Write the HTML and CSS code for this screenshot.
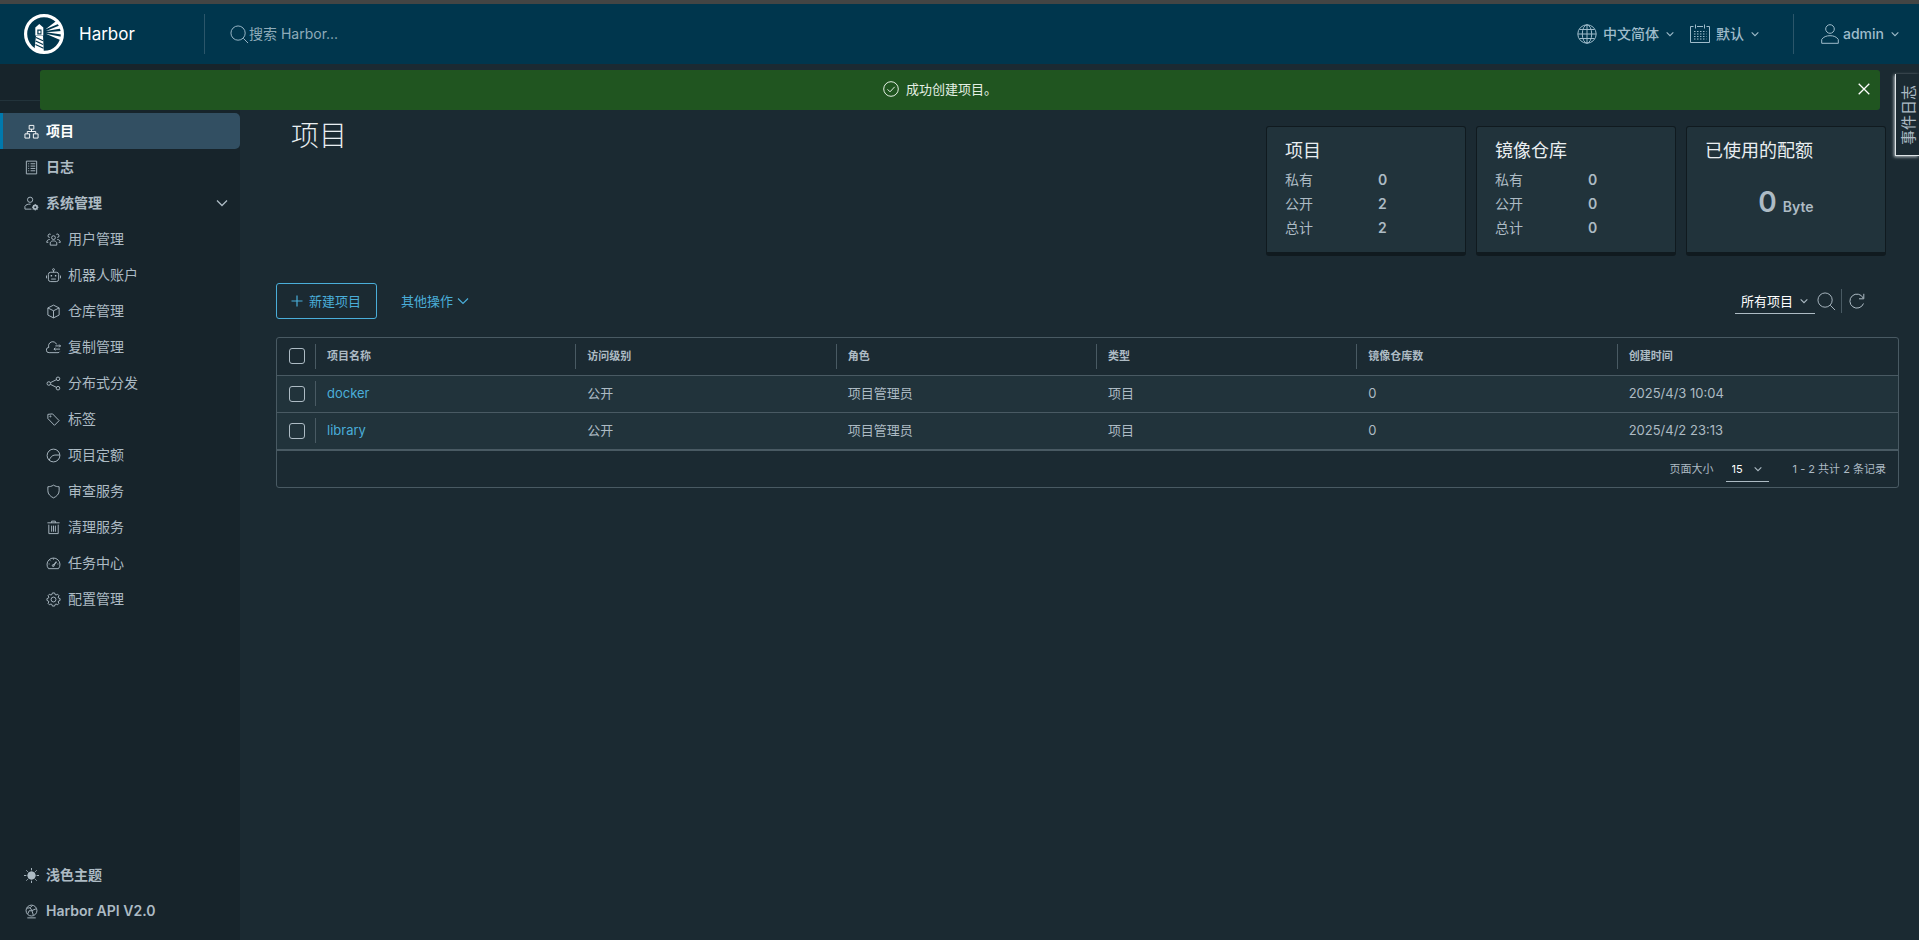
FILE: index.html
```html
<!DOCTYPE html>
<html lang="zh-CN">
<head>
<meta charset="utf-8">
<title>Harbor</title>
<link rel="stylesheet" href="styles.css">
</head>
<body>
<svg class="sprite" aria-hidden="true">
  <symbol id="chevron" viewBox="0 0 12 12"><path d="M1 3.500 6 8.500l5-5"/></symbol>
  <symbol id="search" viewBox="0 0 20 20"><circle cx="8.500" cy="8.500" r="7.500"/><path d="m14 14 5 5"/></symbol>
</svg>

<header class="header">
  <a class="brand" href="#">
    <svg class="logo" viewBox="0 0 40 40" aria-hidden="true">
      <circle cx="20" cy="20" r="18.400" fill="none" stroke="#fff" stroke-width="3.200"/>
      <path fill="#fff" d="M15.300 10 19.300 13.500v2h-8v-2zM11.300 15.500h8v6h-8z"/>
      <path fill="#00364d" d="M13.300 15.500h4.200v5h-4.200z"/>
      <path fill="#fff" d="M14.500 16.700h2v2.600h-2z"/>
      <path fill="#fff" d="M12 21.800h7l.8 16.200-9.300-2.500z"/>
      <path stroke="#00364d" stroke-width="1.200" d="m12 23.500 7 3.300M11.700 27l7.300 3.500M11.500 30.500l8 3.800"/>
      <path fill="#fff" d="m21.500 15.300 10.800-8.300 2.500 2.800zM22 17l14-5.800 1 3.300zM22 18.300l15.500-1.300v3.500zM21.800 19.700l15.400 3-1 3.300z"/>
    </svg>
    <span>Harbor</span>
  </a>
  <form class="search" role="search">
    <label for="q"><svg class="line search-icon" aria-label="搜索"><use href="#search"/></svg></label>
    <input id="q" type="text" placeholder="搜索 Harbor...">
  </form>
  <div class="header-actions">
    <button class="header-button">
      <svg class="line icon-lg" viewBox="0 0 20 20"><circle cx="10" cy="10" r="9.200"/><ellipse cx="10" cy="10" rx="4.700" ry="9.200"/><path d="M10 .8v18.400M1 10h18M2.500 5.500h15M2.500 14.500h15"/></svg>
      <span>中文简体</span><svg class="line caret"><use href="#chevron"/></svg>
    </button>
    <button class="header-button">
      <svg class="line icon-lg" viewBox="0 0 20 20"><path d="M3.500 2.500h-3v16h19v-16h-3M7 2.500h6M5.500.5v4M14.500.5v4"/><path stroke-dasharray="1.500 1.500" d="M4 7.500h12.500M4 10h12.500M4 12.500h12.500M4 15h12.500"/></svg>
      <span>默认</span><svg class="line caret"><use href="#chevron"/></svg>
    </button>
    <button class="header-button account">
      <svg class="line icon-user" viewBox="0 0 18 20"><circle cx="9" cy="5" r="4.300"/><path d="M.7 19.300v-3.800C2.500 12.700 5.500 11.700 9 11.700s6.500 1 8.300 3.800v3.800z"/></svg>
      <span>admin</span><svg class="line caret"><use href="#chevron"/></svg>
    </button>
  </div>
</header>

<div class="alert" role="status">
  <svg class="line" viewBox="0 0 16 16"><circle cx="8" cy="8" r="7.300"/><path d="m4.500 8.300 2.500 2.500 4.700-5"/></svg>
  <span>成功创建项目。</span>
  <button class="alert-close" aria-label="关闭"><svg class="line" viewBox="0 0 12 12"><path d="m.7.7 10.600 10.600M11.300.7.7 11.300"/></svg></button>
</div>
<button class="event-log">事件日志</button>

<div class="layout">
  <nav class="sidebar">
    <a class="nav-item active" href="#"><svg class="line" viewBox="0 0 16 16"><path d="M5.500 1.500h5v4h-5zM1 10.500h5V15H1zM10 10.500h5V15h-5zM8 5.500V8M3.500 10.500V8h9v2.500"/></svg>项目</a>
    <a class="nav-item" href="#"><svg class="line" viewBox="0 0 16 16"><path d="M2.500 1.200h11v13.600h-11zM4.500 4h1M4.500 6.500h1M4.500 9h1M4.500 11.500h1M7 4h5M7 6.500h5M7 9h5M7 11.500h5"/></svg>日志</a>
    <button class="nav-item" aria-expanded="true"><svg class="line" viewBox="0 0 16 16"><circle cx="6.500" cy="4" r="2.800"/><path d="M8 14H1v-3c1-1.800 3-2.500 6-2.300"/><circle cx="12" cy="12" r="2" stroke-width="1.800"/><path d="M12 8.500v1.200M12 14.300v1.200M8.500 12h1.200M14.300 12h1.200M9.600 9.600l.8.800M14.400 9.600l-.8.800M9.600 14.400l.8-.8M14.400 14.400l-.8-.8"/></svg><span>系统管理</span><svg class="line nav-caret"><use href="#chevron"/></svg></button>
    <div class="nav-children">
      <a class="nav-item" href="#"><svg class="line" viewBox="0 0 16 16"><circle cx="8" cy="6" r="2"/><path d="M4.500 14v-2.500c.6-1.500 1.800-2 3.500-2s2.900.5 3.500 2V14zM5 2.500a1.800 1.800 0 1 0-1 3.300M11 2.500a1.800 1.800 0 1 1 1 3.300M4 8c-1.700 0-3 .8-3.300 3h1.800M12 8c1.700 0 3 .8 3.300 3h-1.800"/></svg>用户管理</a>
      <a class="nav-item" href="#"><svg class="line" viewBox="0 0 16 16"><rect x="2.500" y="4.500" width="11" height="10" rx="2.500"/><circle cx="8" cy="1.700" r="1"/><path d="M8 2.700v1.800M.5 8v3M15.500 8v3M5.500 11.800h5"/><path d="M5 8.200h1.500M9.500 8.200H11" stroke-width="1.500"/></svg>机器人账户</a>
      <a class="nav-item" href="#"><svg class="line" viewBox="0 0 16 16"><path d="m8 1.200 6 3v7.600l-6 3-6-3V4.200zM2 4.200l6 3 6-3M8 7.200v7.600"/></svg>仓库管理</a>
      <a class="nav-item" href="#"><svg class="line" viewBox="0 0 16 16"><path d="M14.500 12.500c-.3.700-1 1-1.700 1H3.300a2.800 2.800 0 0 1-.3-5.600 4.400 4.400 0 0 1 8.300-3.200M10 6.300h5.500M14 4.800l1.500 1.500L14 7.800M15 9.700H8.500M10 8.200 8.500 9.700l1.500 1.500"/></svg>复制管理</a>
      <a class="nav-item" href="#"><svg class="line" viewBox="0 0 16 16"><circle cx="3" cy="8" r="1.900"/><circle cx="12.800" cy="3" r="1.900"/><circle cx="12.800" cy="13" r="1.900"/><path d="m4.700 7.100 6.400-3.200M4.700 8.900l6.400 3.200"/></svg>分布式分发</a>
      <a class="nav-item" href="#"><svg class="line" viewBox="0 0 16 16"><path d="M2 2.500 7 2l7 7.200-5 5L2 7z"/><circle cx="4.700" cy="4.700" r=".6"/></svg>标签</a>
      <a class="nav-item" href="#"><svg class="line" viewBox="0 0 16 16"><circle cx="8" cy="8" r="6.800"/><path d="M14.800 7.500H9.500C6 7.800 5 10 3.300 13"/></svg>项目定额</a>
      <a class="nav-item" href="#"><svg class="line" viewBox="0 0 16 16"><path d="M8 1.200c2 1.300 4 1.700 6 1.700v4.300c0 3.500-2.500 6-6 7.600-3.500-1.600-6-4.100-6-7.600V2.900c2 0 4-.4 6-1.700z"/></svg>审查服务</a>
      <a class="nav-item" href="#"><svg class="line" viewBox="0 0 16 16"><path d="M1.500 3h13M6 3V1.200h4V3M3 5v9.500h10V5M6 6v6.500M8 6v6.500M10 6v6.500"/></svg>清理服务</a>
      <a class="nav-item" href="#"><svg class="line" viewBox="0 0 16 16"><path d="M2.700 13.500a6.900 6.900 0 1 1 10.600 0zM8 2.500v1.300M2.800 8.500h1M12.200 8.500h1M4.300 4.700l.8.800"/><path d="m8 10 3.200-4" stroke-width="1.500"/><circle cx="7.700" cy="10.200" r="1"/></svg>任务中心</a>
      <a class="nav-item" href="#"><svg class="line" viewBox="0 0 16 16"><circle cx="8" cy="8" r="2.600"/><path d="m6.800 1-.5 1.700-1 .5-1.700-.8-1.400 1.500.8 1.600-.4 1L1 7v2l1.600.6.4 1-.8 1.500 1.400 1.500 1.700-.8 1 .5.500 1.700h2.400l.5-1.700 1-.5 1.700.8 1.400-1.500-.8-1.500.4-1L15 9V7l-1.600-.5-.4-1 .8-1.600-1.400-1.500-1.700.8-1-.5L9.200 1z"/></svg>配置管理</a>
    </div>
    <div class="nav-footer">
      <button class="nav-item"><svg class="line" viewBox="0 0 16 16"><circle cx="8" cy="8" r="4" fill="currentColor"/><path d="M8 0v2.500M8 13.500V16M0 8h2.500M13.500 8H16M2.500 2.500l1.500 1.500M13.500 2.500 12 4M2.500 13.500 4 12M13.500 13.500 12 12"/></svg>浅色主题</button>
      <a class="nav-item" href="#"><svg class="line" viewBox="0 0 16 16"><circle cx="8" cy="7" r="5.800"/><path d="m3 4.500 3.500-.5 2 3L13 5M6.500 4 9 1.500M4 10.500l1.500-3.300 3 0L10 12M3.500 14.800h9"/></svg>Harbor API V2.0</a>
    </div>
  </nav>

  <main class="content">
    <section class="overview">
      <h1>项目</h1>
      <div class="cards">
        <article class="card"><h2>项目</h2>
          <dl><dt>私有</dt><dd>0</dd><dt>公开</dt><dd>2</dd><dt>总计</dt><dd>2</dd></dl></article>
        <article class="card"><h2>镜像仓库</h2>
          <dl><dt>私有</dt><dd>0</dd><dt>公开</dt><dd>0</dd><dt>总计</dt><dd>0</dd></dl></article>
        <article class="card"><h2>已使用的配额</h2>
          <p class="quota"><strong>0</strong><span>Byte</span></p></article>
      </div>
    </section>

    <div class="toolbar">
      <button class="button outline"><svg class="line" viewBox="0 0 12 12"><path d="M6 .5v11M.5 6h11"/></svg>新建项目</button>
      <button class="button link">其他操作<svg class="line"><use href="#chevron"/></svg></button>
      <div class="filters">
        <div class="select">
          <select aria-label="项目筛选"><option>所有项目</option></select>
          <svg class="line caret"><use href="#chevron"/></svg>
        </div>
        <button class="icon-button" aria-label="搜索"><svg class="line search-icon"><use href="#search"/></svg></button>
        <button class="icon-button refresh" aria-label="刷新"><svg class="line" viewBox="0 0 16 16"><path d="M14.500 10.500a7 7 0 1 1-.3-5.500M14.800.8v5H10"/></svg></button>
      </div>
    </div>

    <div class="datagrid">
      <table>
        <colgroup><col class="col-check"><col class="col-data" span="5"><col></colgroup>
        <thead>
          <tr><th class="check" scope="col"><input type="checkbox" aria-label="全选"></th><th scope="col">项目名称</th><th scope="col">访问级别</th><th scope="col">角色</th><th scope="col">类型</th><th scope="col">镜像仓库数</th><th scope="col">创建时间</th></tr>
        </thead>
        <tbody>
          <tr><td class="check"><input type="checkbox" aria-label="选择 docker"></td><td><a href="#">docker</a></td><td>公开</td><td>项目管理员</td><td>项目</td><td>0</td><td>2025/4/3 10:04</td></tr>
          <tr><td class="check"><input type="checkbox" aria-label="选择 library"></td><td><a href="#">library</a></td><td>公开</td><td>项目管理员</td><td>项目</td><td>0</td><td>2025/4/2 23:13</td></tr>
        </tbody>
      </table>
      <footer class="pagination">
        <label for="page-size">页面大小</label>
        <div class="select small">
          <select id="page-size"><option>15</option></select>
          <svg class="line caret"><use href="#chevron"/></svg>
        </div>
        <span class="range">1 - 2 共计 2 条记录</span>
      </footer>
    </div>
  </main>
</div>
</body>
</html>
```

FILE: styles.css
```css
* { box-sizing: border-box; }

body {
  margin: 0;
  min-height: 100vh;
  display: flex;
  flex-direction: column;
  position: relative;
  background: #1b2a32;
  color: #adbbc4;
  font: 13px/20px Inter, "Noto Sans CJK SC", sans-serif;
}

button, input, select {
  font: inherit;
  color: inherit;
  background: none;
  border: 0;
  padding: 0;
  margin: 0;
}

a { color: inherit; text-decoration: none; }
h1, h2, p, dl, dd { margin: 0; }
.sprite { position: absolute; width: 0; height: 0; }
.line { fill: none; stroke: currentColor; stroke-width: 1; flex: none; }

/* Header */
.header {
  display: flex;
  align-items: center;
  height: 64px;
  border-top: 4px solid #434544;
  background: #00364d;
  color: #9fbccb;
}
.brand {
  display: flex;
  align-items: center;
  gap: 15px;
  width: 205px;
  height: 40px;
  padding-left: 24px;
  border-right: 1px solid #2b566a;
  color: #fff;
  font-size: 17px;
}
.logo { width: 40px; height: 40px; }
.search { display: flex; align-items: center; padding-left: 25px; }
.search label { display: flex; }
.search input { width: 240px; outline: 0; font-size: 14px; }
.search input::placeholder { color: #8fabb9; opacity: 1; }
.search-icon { width: 19px; height: 19px; }
.header-actions {
  display: flex;
  align-items: center;
  margin-left: auto;
  padding-right: 20px;
  font-size: 14px;
  font-weight: 500;
}
.header-button { display: flex; align-items: center; height: 40px; margin-right: 16px; }
.icon-lg { width: 20px; height: 20px; margin-right: 6px; }
.icon-user { width: 18px; height: 20px; margin-right: 4px; }
.caret { width: 8px; height: 8px; stroke-width: 1.6; }
.header-button .caret { margin-left: 7px; }
.account { margin: 0 0 0 18px; padding-left: 27px; border-left: 1px solid #2b566a; }

/* Overlays */
.alert {
  position: absolute;
  top: 70px;
  left: 40px;
  right: 39px;
  height: 40px;
  display: flex;
  align-items: center;
  justify-content: center;
  gap: 7px;
  padding: 0 40px 2px 0;
  border-radius: 3px;
  background: #205520;
  color: #e4f0e4;
}
.alert > svg { width: 16px; height: 16px; }
.alert-close { position: absolute; right: 10px; top: 13px; display: flex; color: #fff; }
.alert-close svg { width: 12px; height: 12px; stroke-width: 1.3; }
.event-log {
  position: absolute;
  top: 74px;
  right: 0;
  width: 24px;
  height: 82px;
  writing-mode: vertical-rl;
  text-orientation: sideways;
  transform: rotate(180deg);
  padding-right: 2px;
  border-top: 1px solid #dde3e6;
  border-right: 1px solid #dde3e6;
  box-shadow: 1px -1px 3px #b5bec3;
  background: #1b2a32;
  font-size: 15px;
}

/* Layout */
.layout { display: flex; flex: 1; }
.sidebar {
  display: flex;
  flex-direction: column;
  flex: 0 0 240px;
  padding: 49px 0 11px;
  background: linear-gradient(#22333b, #22333b) 0 36px / 100% 1px no-repeat #17242b;
}
.nav-item {
  display: flex;
  align-items: center;
  gap: 7px;
  width: 100%;
  height: 36px;
  padding: 0 12px 0 24px;
  font-size: 14px;
  font-weight: 600;
}
.nav-item svg { width: 15px; height: 15px; stroke-width: 1; }
.nav-item .nav-caret { width: 12px; height: 12px; margin-left: auto; stroke-width: 1.3; }
.active {
  padding-left: 21px;
  border-left: 3px solid #0079ad;
  border-radius: 0 5px 5px 0;
  background: #324f62;
  color: #fff;
}
.nav-children .nav-item { padding-left: 46px; font-weight: 400; }
.nav-footer { margin-top: auto; }

.content { flex: 1; min-width: 0; padding: 52px 20px 24px 36px; }
.overview { display: flex; justify-content: space-between; height: 167px; }
h1 {
  padding-left: 15px;
  color: #e9eef1;
  font-size: 28px;
  font-weight: 300;
  line-height: 40px;
}
.cards { display: flex; gap: 10px; padding: 10px 13px 0 0; }
.card {
  width: 200px;
  height: 130px;
  padding: 10px 18px;
  border: 1px solid #101a1f;
  border-bottom-width: 4px;
  border-radius: 3px;
  background: #21333b;
}
.card h2 { color: #e9eef1; font-size: 18px; font-weight: 400; line-height: 28px; }
.card dl {
  display: grid;
  grid-template-columns: 93px 1fr;
  grid-auto-rows: 24px;
  padding-top: 3px;
  line-height: 24px;
  font-size: 14px;
}
.card dd { font-weight: 600; }
.quota {
  display: flex;
  align-items: baseline;
  justify-content: center;
  gap: 6px;
  padding-top: 17px;
  font-weight: 600;
  line-height: 40px;
  font-size: 14px;
}
.quota strong { font-size: 28px; font-weight: 600; }

/* Toolbar */
.toolbar { display: flex; align-items: center; height: 36px; }
.button { display: flex; align-items: center; height: 36px; color: #4aaed9; }
.outline { gap: 6px; padding: 0 15px 0 14px; border: 1px solid #4aaed9; border-radius: 3px; }
.link { gap: 4px; margin-left: 24px; }
.button svg { width: 12px; height: 12px; stroke-width: 1.2; }
.filters { display: flex; align-items: center; margin-left: auto; padding-right: 34px; }
.select { position: relative; width: 80px; border-bottom: 1px solid #adbbc4; color: #fff; }
.select select { appearance: none; display: block; width: 100%; height: 24px; padding-left: 6px; outline: 0; }
.select .caret { position: absolute; right: 7px; top: 8px; color: #adbbc4; }
.icon-button { display: flex; align-items: center; height: 24px; padding-left: 2px; }
.refresh { margin-left: 5px; padding-left: 7px; border-left: 1px solid #495a63; }
.refresh svg { width: 16px; height: 16px; }

/* Project table */
.datagrid { margin-top: 18px; border: 1px solid #495a63; border-radius: 3px; }
table { width: 100%; table-layout: fixed; border-collapse: collapse; }
.col-check { width: 38px; }
.col-data { width: 16.06%; }
th, td { height: 37px; padding: 0 0 0 12px; text-align: left; font-weight: 400; }
td { padding-bottom: 2px; }
th { font-size: 11px; font-weight: 600; }
tr { border-bottom: 1px solid #495a63; }
thead tr { border-bottom: 0; }
tbody tr { background: #21333b; }
tbody tr:first-child { border-top: 1px solid #495a63; }
tbody tr:last-child { border-bottom: 0; }
th + th, .check + td {
  background: linear-gradient(#495a63, #495a63) 0 50% / 1px 25px no-repeat;
}
td a { color: #4aaed9; }
.check { padding-bottom: 0; }
input[type="checkbox"] {
  appearance: none;
  display: block;
  width: 16px;
  height: 16px;
  border: 1px solid #adbbc4;
  border-radius: 3px;
}
.pagination {
  display: flex;
  align-items: center;
  justify-content: flex-end;
  height: 38px;
  padding-right: 12px;
  border-top: 2px solid #495a63;
  font-size: 11px;
}
.small { width: 43px; margin: 0 24px 0 12px; }
.small select { font-size: 11px; }
```
